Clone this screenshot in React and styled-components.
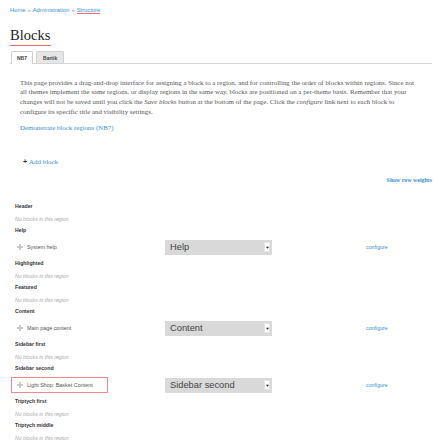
import React from "react";
import styled, { createGlobalStyle } from "styled-components";

const Global = createGlobalStyle`
  html, body { margin: 0; padding: 0; background: #fff; }
  body { width: 440px; height: 440px; overflow: hidden; font-family: "Liberation Sans", Arial, sans-serif; }
  a { text-decoration: none; }
`;

const Page = styled.div`
  padding: 0 8px 0 10px;
  height: 440px;
  overflow: hidden;
`;

const Breadcrumb = styled.nav`
  margin-top: 6px;
  height: 8px;
  line-height: 8px;
  font-size: 5.8px;
  color: #3b8fd3;
  display: flex;
  gap: 2px;
`;

const Crumb = styled.a`
  color: #3b8fd3;
  ${(p) =>
    p.$marked &&
    `border-bottom: 1px solid #ef6a6a; line-height: 6px; height: 6px; margin-top: 1px;`}
`;

const Sep = styled.span`
  color: #8aa;
`;

const Title = styled.h1`
  margin: 13px 0 0 0;
  height: 18px;
  font-family: "Liberation Serif", Georgia, serif;
  font-weight: normal;
  font-size: 14.5px;
  line-height: 16px;
  color: #222;
  display: inline-block;
  border-bottom: 1px solid #ef6a6a;
  padding-right: 1px;
`;

const Tabs = styled.div`
  margin-top: 5px;
  display: flex;
  gap: 3px;
  padding-left: 1px;
  border-bottom: 1px solid #d4d4d4;
  height: 12px;
`;

const Tab = styled.div`
  height: ${(p) => (p.$active ? "13px" : "12px")};
  box-sizing: border-box;
  padding: 0 ${(p) => (p.$active ? "5px" : "6px")};
  border: 1px solid #d0d0d0;
  border-bottom: none;
  border-radius: 2px 2px 0 0;
  background: ${(p) => (p.$active ? "#fff" : "#e6e6e6")};
  font-size: 5px;
  font-weight: bold;
  line-height: 12px;
  color: #444;
`;

const Intro = styled.p`
  margin: 13.5px 0 0 10px;
  font-family: "Liberation Serif", Georgia, serif;
  font-size: 6.9px;
  line-height: 9.7px;
  color: #555;
  white-space: nowrap;
`;

const Link = styled.a`
  display: block;
  margin: 7px 0 0 10px;
  font-family: "Liberation Serif", Georgia, serif;
  font-size: 6.9px;
  line-height: 9.7px;
  color: #3b8fd3;
`;

const AddBlock = styled.div`
  margin: 24px 0 0 13px;
  font-family: "Liberation Serif", Georgia, serif;
  font-size: 6.9px;
  line-height: 10px;
  display: flex;
  gap: 2px;
  align-items: center;
`;

const Plus = styled.span`
  color: #333;
  font-family: "Liberation Sans", Arial, sans-serif;
  font-weight: bold;
  font-size: 7px;
`;

const AddLink = styled.a`
  color: #3b8fd3;
`;

const Weights = styled.div`
  margin-top: 8px;
  text-align: right;
  font-family: "Liberation Serif", Georgia, serif;
  font-size: 5.9px;
  line-height: 10px;
  color: #3b8fd3;
  font-weight: bold;
`;

const Regions = styled.div`
  margin-top: 16px;
  padding-left: 5px;
`;

const RegionLabel = styled.div`
  height: 12px;
  line-height: 11px;
  font-size: 5.2px;
  font-weight: bold;
  color: #333;
`;

const Empty = styled.div`
  height: 12px;
  line-height: 12px;
  font-size: 5.2px;
  font-style: italic;
  color: #aaa;
`;

const BlockRow = styled.div`
  height: 21px;
  display: grid;
  grid-template-columns: 150px 201px 1fr;
  align-items: center;
  padding-bottom: 1px;
  box-sizing: border-box;
`;

const NameCell = styled.div`
  display: flex;
  align-items: center;
  gap: 4px;
  height: 16px;
  box-sizing: border-box;
  margin-left: -4px;
  padding-left: 5px;
  width: 97px;
  font-size: 5.4px;
  color: #555;
  border: 1px solid ${(p) => (p.$marked ? "#f08a8a" : "transparent")};
`;

const SelectBox = styled.div`
  width: 107px;
  height: 15px;
  box-sizing: border-box;
  background: #d9d9d9;
  display: flex;
  align-items: center;
  justify-content: space-between;
  padding: 0 2px 0 5px;
  font-size: 9.3px;
  color: #444;
`;

const Arrow = styled.span`
  width: 6px;
  height: 10px;
  background: #fff;
  border: 1px solid #e4e4e4;
  box-sizing: border-box;
  display: flex;
  align-items: center;
  justify-content: center;
`;

const Configure = styled.a`
  font-size: 5.3px;
  color: #3b8fd3;
`;

const Handle = () => (
  <svg width="6" height="6" viewBox="0 0 12 12">
    <g fill="none" stroke="#9a9a9a" strokeWidth="1.4">
      <path d="M6 1v10M1 6h10" />
    </g>
    <g fill="#9a9a9a">
      <path d="M6 0l2 2.4H4zM6 12l2-2.4H4zM0 6l2.4 2V4zM12 6L9.6 8V4z" />
    </g>
  </svg>
);

const Block = ({ name, region, marked }) => (
  <BlockRow>
    <NameCell $marked={marked}>
      <Handle />
      <span>{name}</span>
    </NameCell>
    <SelectBox>
      <span>{region}</span>
      <Arrow>
        <svg width="3" height="3" viewBox="0 0 4 4">
          <path d="M0 1h4L2 3.5z" fill="#222" />
        </svg>
      </Arrow>
    </SelectBox>
    <Configure href="#">configure</Configure>
  </BlockRow>
);

const regions = [
  { label: "Header" },
  { label: "Help", block: { name: "System help", region: "Help" } },
  { label: "Highlighted" },
  { label: "Featured" },
  { label: "Content", block: { name: "Main page content", region: "Content" } },
  { label: "Sidebar first" },
  {
    label: "Sidebar second",
    block: { name: "Light Shop: Basket Content", region: "Sidebar second", marked: true },
  },
  { label: "Triptych first" },
  { label: "Triptych middle" },
];

export default function App() {
  return (
    <>
      <Global />
      <Page>
        <Breadcrumb>
          <Crumb href="#">Home</Crumb>
          <Sep>»</Sep>
          <Crumb href="#">Administration</Crumb>
          <Sep>»</Sep>
          <Crumb href="#" $marked>
            Structure
          </Crumb>
        </Breadcrumb>
        <Title>Blocks</Title>
        <Tabs>
          <Tab $active>NB7</Tab>
          <Tab>Bartik</Tab>
        </Tabs>
        <Intro>
          This page provides a drag-and-drop interface for assigning a block to a region, and for controlling the order of blocks within regions. Since not
          <br />
          all themes implement the same regions, or display regions in the same way, blocks are positioned on a per-theme basis. Remember that your
          <br />
          changes will not be saved until you click the <em>Save blocks</em> button at the bottom of the page. Click the <em>configure</em> link next to each block to
          <br />
          configure its specific title and visibility settings.
        </Intro>
        <Link href="#">Demonstrate block regions (NB7)</Link>
        <AddBlock>
          <Plus>+</Plus>
          <AddLink href="#">Add block</AddLink>
        </AddBlock>
        <Weights>Show row weights</Weights>
        <Regions>
          {regions.map((r) => (
            <React.Fragment key={r.label}>
              <RegionLabel>{r.label}</RegionLabel>
              {r.block ? <Block {...r.block} /> : <Empty>No blocks in this region</Empty>}
            </React.Fragment>
          ))}
        </Regions>
      </Page>
    </>
  );
}
